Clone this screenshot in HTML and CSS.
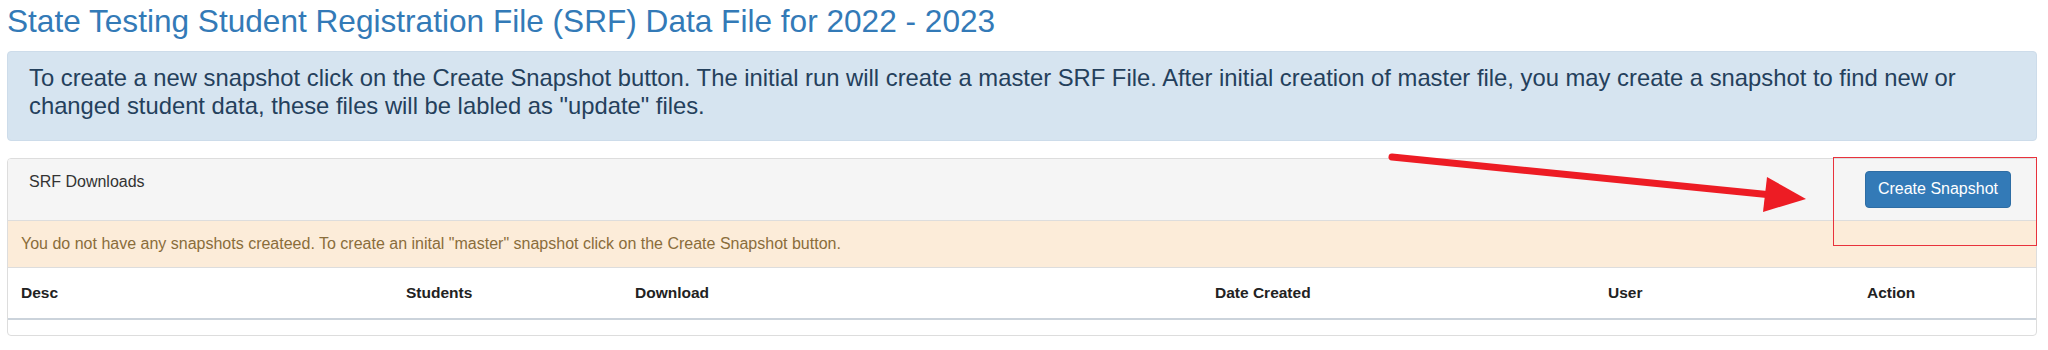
FILE: index.html
```html
<!DOCTYPE html>
<html lang="en">
<head>
<meta charset="utf-8">
<title>SRF Data File</title>
<link rel="stylesheet" href="styles.css">
</head>
<body>
<div class="page">
  <h2 class="title">State Testing Student Registration File (SRF) Data File for 2022 - 2023</h2>
  <div class="alert-info">To create a new snapshot click on the Create Snapshot button. The initial run will create a master SRF File. After initial creation of master file, you may create a snapshot to find new or changed student data, these files will be labled as "update" files.</div>
  <div class="panel">
    <div class="panel-heading">
      <span class="panel-title">SRF Downloads</span>
      <button class="btn-primary" type="button">Create Snapshot</button>
    </div>
    <div class="warning">You do not have any snapshots createed. To create an inital "master" snapshot click on the Create Snapshot button.</div>
    <table class="grid">
      <colgroup>
        <col class="c-desc"><col class="c-students"><col class="c-download"><col class="c-date"><col class="c-user"><col class="c-action">
      </colgroup>
      <thead>
        <tr><th>Desc</th><th>Students</th><th>Download</th><th>Date Created</th><th>User</th><th>Action</th></tr>
      </thead>
      <tbody>
        <tr class="empty-row"><td colspan="6"></td></tr>
      </tbody>
    </table>
  </div>
  <div class="callout-box"></div>
  <svg class="callout-arrow" width="2048" height="350" viewBox="0 0 2048 350" aria-hidden="true">
    <line x1="1392" y1="153" x2="1772" y2="191" stroke="#ed1c24" stroke-width="7" stroke-linecap="round"/>
    <polygon points="1767,173 1806,195 1763,208" fill="#ed1c24"/>
  </svg>
</div>
</body>
</html>
```

FILE: styles.css
```css
html, body {
  margin: 0;
  padding: 0;
  background: #ffffff;
}
.page {
  position: relative;
  padding: 0 11px 0 7px;
  font-family: "Liberation Sans", Arial, Helvetica, sans-serif;
  font-size: 16px;
  line-height: 22.86px;
  color: #333333;
}
.title {
  margin: 4px 0 12px;
  font-size: 31.6px;
  line-height: 35px;
  font-weight: normal;
  color: #337ab7;
}
.alert-info {
  background: #d6e4f0;
  border: 1px solid #cddcea;
  border-radius: 4px;
  padding: 12px 21px 20px;
  font-size: 23.8px;
  line-height: 28px;
  color: #24405c;
  margin-bottom: 17px;
}
.panel {
  border: 1px solid #dddddd;
  border-radius: 4px;
  overflow: hidden;
  background: #ffffff;
}
.panel-heading {
  display: flex;
  justify-content: space-between;
  align-items: flex-start;
  background: #f5f5f5;
  border-bottom: 1px solid #dddddd;
  padding: 12px 25px 12px 21px;
}
.panel-title {
  color: #333333;
}
.btn-primary {
  font-family: inherit;
  font-size: 16px;
  line-height: 22.86px;
  padding: 6px 12px;
  color: #ffffff;
  background: #337ab7;
  border: 1px solid #2e6da4;
  border-radius: 4px;
  cursor: pointer;
}
.warning {
  background: #fcecd9;
  color: #8a6d3b;
  padding: 12px 13px 11px;
  border-bottom: 1px solid #dddddd;
}
.grid {
  width: 100%;
  border-collapse: collapse;
  table-layout: fixed;
}
.c-desc { width: 385px; }
.c-students { width: 229px; }
.c-download { width: 580px; }
.c-date { width: 393px; }
.c-user { width: 259px; }
.c-action { width: auto; }
.grid th {
  text-align: left;
  font-size: 15.5px;
  line-height: 22px;
  font-weight: bold;
  color: #222222;
  padding: 14px 13px;
  border-bottom: 2px solid #cbd3db;
}
.empty-row td {
  height: 15px;
  padding: 0;
}
.callout-box {
  position: absolute;
  left: 1833px;
  top: 153px;
  width: 202px;
  height: 87px;
  border: 1.5px solid #e8323c;
  pointer-events: none;
}
.callout-arrow {
  position: absolute;
  left: 0;
  top: 0;
  pointer-events: none;
}
```
